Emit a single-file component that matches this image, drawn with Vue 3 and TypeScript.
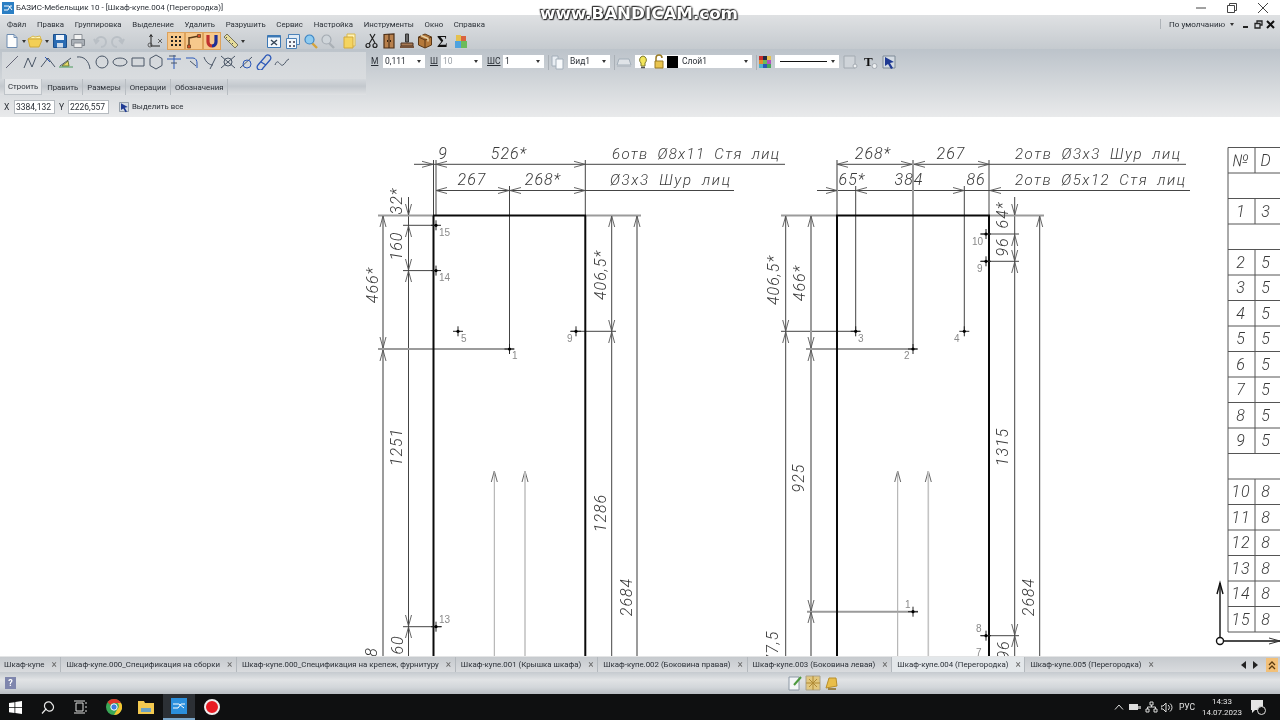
<script setup lang="ts">
import { h } from "vue";

type Part = { d?: string; f?: string; s?: string; w?: number; t?: string; x?: number; y?: number; fs?: number };
type Icon = { cx: number; parts: Part[]; on?: boolean; caret?: boolean };

// small svg icon out of a list of paths
const Ico = (props: { parts: Part[] }) =>
  h(
    "svg",
    { viewBox: "0 0 16 16", width: 16, height: 16, style: "display:block;flex:none" },
    props.parts.map((p) =>
      p.t
        ? h("text", { x: p.x, y: p.y, "font-size": p.fs, "font-weight": "bold", fill: p.f, "font-family": "Liberation Serif, serif" }, p.t)
        : h("path", { d: p.d, fill: p.f ?? "none", stroke: p.s ?? "none", "stroke-width": p.w ?? 1 })
    )
  );
Ico.props = ["parts"];

const doc: Part[] = [
  { d: "M3 1.5h7l3 3v10H3z", f: "#fdfdfd", s: "#6d8bb0" },
  { d: "M10 1.5v3h3", s: "#6d8bb0" },
];
const folder: Part[] = [
  { d: "M1 6l5-3 2 1 5-1 1 3z", f: "#fff6b8", s: "#d8b94f" },
  { d: "M1 6h12l2 1-3 7H3z", f: "#f3cf55", s: "#cfa93a" },
];
const save: Part[] = [
  { d: "M1.5 1.5h12l1 1v12h-13z", f: "#2b6cb3", s: "#1c4f8c" },
  { d: "M4 2h8v5H4z", f: "#eef4fb" },
  { d: "M5 10h6v4.5H5z", f: "#cfdcea" },
];
const printer: Part[] = [
  { d: "M4 1.5h8v5H4z", f: "#f2f2f2", s: "#8b9097" },
  { d: "M1.5 6.5h13v6h-13z", f: "#aab0b7", s: "#7d838a" },
  { d: "M4 10h8v4.5H4z", f: "#eee", s: "#8b9097" },
];
const undo: Part[] = [{ d: "M3 9a5 5 0 1 1 5 5M1 6l2 4 3-3", s: "#b9bfc5", w: 2 }];
const redo: Part[] = [{ d: "M13 9a5 5 0 1 0-5 5M15 6l-2 4-3-3", s: "#b9bfc5", w: 2 }];
const axes: Part[] = [
  { d: "M4 2v11h9M2.5 4L4 1.5 5.5 4", s: "#222" },
  { d: "M11 6l4 4M15 6l-4 4M1 12a2 2 0 1 0 4 0a2 2 0 1 0-4 0", s: "#444", w: 0.8 },
];
const grid: Part[] = [
  { d: "M3 3h2v2H3zM7 3h2v2H7zM11 3h2v2h-2zM3 7h2v2H3zM7 7h2v2H7zM11 7h2v2h-2zM3 11h2v2H3zM7 11h2v2H7zM11 11h2v2h-2z", f: "#222" },
];
const snap: Part[] = [
  { d: "M3 14V4M3 14h0M3 5L13 3", s: "#5b3a17", w: 1.4 },
  { d: "M1.5 12h3v3h-3zM11.5 1.5h3v3h-3z", f: "#d9502a", s: "#5b3a17", w: 0.7 },
];
const magnet: Part[] = [
  { d: "M4 2v7a4 4 0 0 0 4 4", s: "#c0322f", w: 3.2 },
  { d: "M12 2v7a4 4 0 0 1-4 4", s: "#1f2f96", w: 3.2 },
];
const ruler: Part[] = [
  { d: "M1 4l3-3 11 11-3 3z", f: "#e6dc9a", s: "#77735a" },
  { d: "M4 4l-1 1M7 7L6 8M10 10l-1 1", s: "#555" },
];
const zoomAll: Part[] = [
  { d: "M1.5 2.5h13v12h-13z", f: "#f2f7fc", s: "#3c78b5" },
  { d: "M1.5 2.5h13v2h-13z", f: "#3c78b5" },
  { d: "M5 7l6 5M11 7l-6 5", s: "#345", w: 1.4 },
];
const zoomWin: Part[] = [
  { d: "M3.5 1.5h11v10h-11z", f: "#dfeaf5", s: "#4d82b8" },
  { d: "M1.5 5.5h10v10h-10z", f: "#f4f8fc", s: "#4d82b8" },
  { d: "M4 8h2v2H4zM8 8h2v2H8zM4 12h2v2H4zM8 12h2v2H8z", f: "#667" },
];
const lens: Part[] = [
  { d: "M9 10l5 5", s: "#d6a33a", w: 2.4 },
  { d: "M2 6.5a4.5 4.5 0 1 0 9 0a4.5 4.5 0 1 0-9 0", f: "#8ecbf0", s: "#3c85c4", w: 1.2 },
];
const lensOff: Part[] = [
  { d: "M9 10l5 5", s: "#aab0b6", w: 2.4 },
  { d: "M2 6.5a4.5 4.5 0 1 0 9 0a4.5 4.5 0 1 0-9 0", f: "#cfd5da", s: "#a4abb2", w: 1.2 },
];
const stack: Part[] = [
  { d: "M5 1h8v12H5z", f: "#fff3b5", s: "#d7b84e" },
  { d: "M2 4h9v11H2z", f: "#f4d460", s: "#d2a83a" },
];
const scissors: Part[] = [
  { d: "M11 1L5 11M6 1l5 9", s: "#222", w: 1.2 },
  { d: "M2 12.5a2 2 0 1 0 4 0a2 2 0 1 0-4 0M9 12.5a2 2 0 1 0 4 0a2 2 0 1 0-4 0", s: "#222", w: 1.2 },
];
const cabinet: Part[] = [
  { d: "M3 1.5l10-.5v14H3z", f: "#b9814d", s: "#4c2f17", w: 1.2 },
  { d: "M8 1v14M6.5 7v2M9.5 7v2", s: "#3c2410" },
];
const stamp: Part[] = [
  { d: "M6.5 1h3v8h-3z", f: "#6a6a6a", s: "#333" },
  { d: "M2 10h12v3H2z", f: "#a87b55", s: "#4c3320" },
  { d: "M1 13h14v2H1z", f: "#76533a" },
];
const box: Part[] = [
  { d: "M8 1l6.5 3v8L8 15l-6.5-3V4z", f: "#b5793b", s: "#5a3715" },
  { d: "M1.5 4L8 7l6.5-3M8 7v8", s: "#5a3715" },
  { d: "M4 2.5L11 5.5v3", s: "#e8d2a6", w: 1.4 },
];
const sigma: Part[] = [{ t: "Σ", x: 2, y: 14, fs: 16, f: "#111" }];
const props2: Part[] = [
  { d: "M2 8h6v7H2z", f: "#4fa3df" },
  { d: "M8 8h6v7H8z", f: "#6cbb5b" },
  { d: "M3 2h5v6H3z", f: "#e5c14f" },
  { d: "M8 3h5v5H8z", f: "#d9633e" },
];

// place the icons by their center, the row itself stays a flex row
const place = (list: Icon[]) => {
  let right = 0;
  return list.map((ic) => {
    const ml = ic.cx - 8 - right;
    right = ic.cx + 8;
    return { ...ic, ml };
  });
};

const mainIcons = place([
  { cx: 12, parts: doc, caret: true },
  { cx: 35, parts: folder, caret: true },
  { cx: 60, parts: save },
  { cx: 78, parts: printer },
  { cx: 101, parts: undo },
  { cx: 117, parts: redo },
  { cx: 155, parts: axes },
  { cx: 176, parts: grid, on: true },
  { cx: 194, parts: snap, on: true },
  { cx: 212, parts: magnet, on: true },
  { cx: 231, parts: ruler, caret: true },
  { cx: 274, parts: zoomAll },
  { cx: 293, parts: zoomWin },
  { cx: 311, parts: lens },
  { cx: 328, parts: lensOff },
  { cx: 350, parts: stack },
  { cx: 372, parts: scissors },
  { cx: 389, parts: cabinet },
  { cx: 407, parts: stamp },
  { cx: 425, parts: box },
  { cx: 443, parts: sigma },
  { cx: 461, parts: props2 },
]);

const ink = "#4a5666";
const blue = "#2b58b8";
const tools: Part[][] = [
  [{ d: "M2 14L14 2", s: "#667" }],
  [{ d: "M2 14L6 4l4 9 4-10", s: ink }],
  [{ d: "M1 13L8 4l7 9", s: ink }, { d: "M5 3l5 5", s: blue }],
  [{ d: "M2 12L13 4", s: ink }, { d: "M4 12l6-5 1 5z", f: "#e8d96a", s: "#6f7a33" }, { d: "M1 13h14", s: "#4a9a5a" }],
  [{ d: "M1 3c7-1 12 4 13 12", s: ink }],
  [{ d: "M2 8a6 6 0 1 0 12 0a6 6 0 1 0-12 0", s: ink }],
  [{ d: "M1 8a7 4 0 1 0 14 0a7 4 0 1 0-14 0", s: ink }],
  [{ d: "M2 4h12v8H2z", s: ink }],
  [{ d: "M8 1l6 3.5v7L8 15l-6-3.5v-7z", s: ink }],
  [{ d: "M1 5h14M8 1v14", s: blue }, { d: "M3 2h7M5 9h6", s: ink }],
  [{ d: "M2 4h7c3 0 4 3 4 5v5", s: blue }, { d: "M6 7l6 5", s: ink }],
  [{ d: "M2 3c2 6 6 8 9 8M14 3L8 15", s: ink }],
  [{ d: "M4 8a4 4 0 1 0 8 0a4 4 0 1 0-8 0M1 2l14 12M15 2L1 14", s: ink }],
  [{ d: "M2 14L14 3", s: ink }, { d: "M5 10a4 4 0 1 0 8 0a4 4 0 1 0-8 0", s: blue }],
  [{ d: "M2 11a3 3 0 1 0 5 3l7-8a3 3 0 1 0-5-3zM5 8l5 3", s: blue, w: 1.3 }],
  [{ d: "M1 11c3-8 5 2 8 0s3-5 6-6", s: ink }],
];

const menu = ["Файл", "Правка", "Группировка", "Выделение", "Удалить", "Разрушить", "Сервис", "Настройка", "Инструменты", "Окно", "Справка"];
const panelTabs = ["Строить", "Править", "Размеры", "Операции", "Обозначения"];
const docTabs = [
  "Шкаф-купе",
  "Шкаф-купе.000_Спецификация на сборки",
  "Шкаф-купе.000_Спецификация на крепеж, фурнитуру",
  "Шкаф-купе.001 (Крышка шкафа)",
  "Шкаф-купе.002 (Боковина правая)",
  "Шкаф-купе.003 (Боковина левая)",
  "Шкаф-купе.004 (Перегородка)",
  "Шкаф-купе.005 (Перегородка)",
];

// drawing data, in screen coordinates
const heavy = "M433.5 215.5V656M585.3 215.5V656M433 215.5H586M837 215.5V656M989 215.5V656M836 215.5H990";
const grayThick = [
  "M378 215.5H433M586 215.5H641M383 215V656M637 215V656M378 349H514M781 215.5H836M990 215.5H1044",
  "M811 215V656M913 160V349M806 349H917M807 611.7H918M837 160V215",
].join("");
const thin = [
  "M414 164.3H785M436 160V215M433.5 160V215M585.3 160V215M436 190.5H734M509.5 186V349",
  "M408.5 197V656M403 225.3H437M403 270.6H437M403 626.7H442M570 331.3H616M611.7 215V656",
  "M837 164.3H1186M989 160V215M817 190.5H1190M855.7 186V331.3M964.3 186V331.3",
  "M785.7 215V656M781 331.3H860M1014.7 197V656M1039.7 215V656M980 234H1019M980 261.3H1019M980 635.7H1019",
].join("");

type Dir = "u" | "d" | "l" | "r";
const tip = (x: number, y: number, dir: Dir) => {
  const len = 11;
  const half = 3;
  if (dir === "u") return `M${x - half} ${y + len}L${x} ${y}L${x + half} ${y + len}`;
  if (dir === "d") return `M${x - half} ${y - len}L${x} ${y}L${x + half} ${y - len}`;
  if (dir === "l") return `M${x + len} ${y - half}L${x} ${y}L${x + len} ${y + half}`;
  return `M${x - len} ${y - half}L${x} ${y}L${x - len} ${y + half}`;
};
const arrowList: [number, number, Dir][] = [
  [433, 164.3, "r"], [436, 164.3, "l"], [585, 164.3, "r"],
  [436, 190.5, "l"], [509, 190.5, "r"], [510, 190.5, "l"], [585, 190.5, "r"],
  [383, 216, "u"], [383, 348, "d"], [383, 350, "u"],
  [408.5, 215, "d"], [408.5, 226, "u"], [408.5, 270, "d"], [408.5, 271, "u"], [408.5, 626, "d"], [408.5, 627, "u"],
  [611.7, 216, "u"], [611.7, 331, "d"], [611.7, 332, "u"], [637, 216, "u"],
  [494.3, 471, "u"], [525, 471, "u"],
  [837, 164.3, "l"], [912, 164.3, "r"], [914, 164.3, "l"], [989, 164.3, "r"],
  [837, 190.5, "r"], [856, 190.5, "l"], [964, 190.5, "r"], [990, 190.5, "l"],
  [785.7, 216, "u"], [785.7, 331, "d"], [785.7, 332, "u"],
  [811, 216, "u"], [811, 348, "d"], [811, 350, "u"], [811, 611, "d"], [811, 612, "u"],
  [1014.7, 215, "d"], [1014.7, 235, "u"], [1014.7, 261, "d"], [1014.7, 262, "u"], [1014.7, 635, "d"], [1014.7, 636, "u"],
  [1039.7, 216, "u"], [897.7, 471, "u"], [928.3, 471, "u"],
];
const arrows = arrowList.map((a) => tip(a[0], a[1], a[2])).join("");

const marks: [number, number][] = [
  [436, 225.3], [436, 270.6], [436, 626.7], [458, 331.3], [576, 331.3], [509.5, 349],
  [855.7, 331.3], [913, 349], [964.3, 331.3], [986, 234], [986, 261.3], [986, 635.7], [913, 611.7],
];
const crosses = marks.map((m) => `M${m[0] - 5} ${m[1]}h10M${m[0]} ${m[1] - 5}v10`).join("");

const pointLabels: [number, number, string][] = [
  [439, 236, "15"], [439, 281, "14"], [439, 623, "13"], [461, 342, "5"], [567, 342, "9"], [512, 359, "1"],
  [858, 342, "3"], [904, 359, "2"], [954, 342, "4"], [972, 245, "10"], [977, 272, "9"], [976, 632, "8"], [905, 608, "1"], [976, 656, "7"],
];

// plain dimension texts [center x, baseline y, text]
const dims: [number, number, string][] = [
  [443, 159, "9"], [509, 159, "526*"], [472, 185, "267"], [543, 185, "268*"],
  [873, 159, "268*"], [951, 159, "267"], [852, 185, "65*"], [909, 185, "384"], [976, 185, "86"],
];
// rotated ones: [baseline x, center y, text]
const rotated: [number, number, string][] = [
  [402, 201, "32*"], [402, 246, "160"], [378, 285, "466*"], [606, 275, "406,5*"], [402, 447, "1251"],
  [606, 513, "1286"], [632, 597, "2684"], [403, 645, "60"], [377, 652, "8"],
  [779, 280, "406,5*"], [805, 283, "466*"], [1008, 215, "64*"], [1008, 247, "96"], [804, 478, "925"],
  [1008, 447, "1315"], [1034, 597, "2684"], [1009, 650, "96"], [778, 647, "77,5"],
];
// hole notes [start x, baseline y, width, text]
const notes: [number, number, number, string][] = [
  [612, 159, 167, "6отв Ø8х11 Стя лиц"],
  [610, 185, 120, "Ø3х3 Шур лиц"],
  [1015, 159, 165, "2отв Ø3х3 Шур лиц"],
  [1015, 185, 170, "2отв Ø5х12 Стя лиц"],
];

const rowY = (k: number) => 147.5 + 25.5 * k;
const blankRows = [1, 3, 12];
const tableLines =
  Array.from({ length: 20 }, (_, k) => `M1228 ${rowY(k)}H1280`).join("") +
  "M1228 147.5V632" +
  Array.from({ length: 19 }, (_, k) => (blankRows.includes(k) ? "" : `M1255 ${rowY(k)}V${rowY(k + 1)}`)).join("");
const tableRows: [number, string, string][] = [
  [0, "№", "D"], [2, "1", "3"], [4, "2", "5"], [5, "3", "5"], [6, "4", "5"], [7, "5", "5"], [8, "6", "5"], [9, "7", "5"],
  [10, "8", "5"], [11, "9", "5"], [13, "10", "8"], [14, "11", "8"], [15, "12", "8"], [16, "13", "8"], [17, "14", "8"], [18, "15", "8"],
];
</script>

<template>
  <div class="app">
    <header class="title">
      <svg class="app-ico" viewBox="0 0 12 12" width="12" height="12">
        <rect width="12" height="12" fill="#2b7fc4" />
        <path d="M2 4h5l3 4M2 8h4l2-4h2" stroke="#fff" fill="none" />
      </svg>
      <span class="title-text">БАЗИС-Мебельщик 10 - [Шкаф-купе.004 (Перегородка)]</span>
      <div class="win-btns">
        <svg width="10" height="10" viewBox="0 0 10 10"><path d="M0 5h10" stroke="#444" /></svg>
        <svg width="10" height="10" viewBox="0 0 10 10"><path d="M.5 2.5h7v7h-7zM2.5 2.5v-2h7v7h-2" stroke="#444" fill="none" /></svg>
        <svg width="10" height="10" viewBox="0 0 10 10"><path d="M0 0l10 10M10 0L0 10" stroke="#444" /></svg>
      </div>
    </header>

    <div class="watermark">www.BANDICAM.com</div>

    <div class="head">
      <nav class="menu">
        <span v-for="m in menu" :key="m">{{ m }}</span>
        <div class="profile">
          <span class="profile-name">По умолчанию</span>
          <i class="caret-dark"></i>
          <div class="mdi">
            <svg width="9" height="9" viewBox="0 0 9 9"><path d="M1 7h5" stroke="#222" stroke-width="2" /></svg>
            <svg width="9" height="9" viewBox="0 0 9 9"><path d="M1 3.5h5v4.5H1zM3 3V1h5v4H6.5" stroke="#222" fill="none" stroke-width="1.3" /></svg>
            <svg width="9" height="9" viewBox="0 0 9 9"><path d="M1 1l7 7M8 1L1 8" stroke="#111" stroke-width="2" /></svg>
          </div>
        </div>
      </nav>
      <div class="main-icons">
        <span
          v-for="ic in mainIcons"
          :key="ic.cx"
          class="ib"
          :class="{ on: ic.on, caret: ic.caret }"
          :style="{ marginLeft: ic.ml + 'px' }"
        >
          <Ico :parts="ic.parts" />
        </span>
      </div>
    </div>

    <div class="lower">
      <div class="mid">
        <div class="left-col">
          <div class="tool-panel">
            <Ico v-for="(parts, i) in tools" :key="i" :parts="parts" />
          </div>
          <div class="panel-tabs">
            <span v-for="(t, i) in panelTabs" :key="t" class="ptab" :class="{ active: i === 0 }">{{ t }}</span>
          </div>
        </div>
        <div class="props">
          <span class="lbl under w-m">М</span>
          <span class="field combo w-42">0,111</span>
          <span class="lbl under w-sh">Ш</span>
          <span class="field combo w-41 muted">10</span>
          <span class="lbl under w-shs">ШС</span>
          <span class="field combo w-41">1</span>
          <i class="sep"></i>
          <Ico class="ml-2" :parts="[{ d: 'M2 2h6v10H2z', f: '#e8edf2', s: '#a3aeb9' }, { d: 'M6 5h7v10H6z', f: '#f7f9fb', s: '#a3aeb9' }]" />
          <span class="field combo w-42 ml-1">Вид1</span>
          <i class="sep"></i>
          <Ico class="ml-2" :parts="[{ d: 'M3 5h10l2 6H1z', f: '#dfe3e7', s: '#a3aeb9' }, { d: 'M1 11h14v2H1z', f: '#b8bfc6' }]" />
          <span class="field layer">
            <Ico :parts="[{ d: 'M8 2a4 4 0 0 1 2 7v3H6V9a4 4 0 0 1 2-7z', f: '#f3e65b', s: '#7e7a2b' }, { d: 'M6 13.5h4', s: '#555', w: 1.5 }]" />
            <Ico :parts="[{ d: 'M5 7V4a3 3 0 0 1 6 0', s: '#9a7a22', w: 1.5 }, { d: 'M4 7h8v7H4z', f: '#e9c44e', s: '#9a7a22' }]" />
            <i class="swatch"></i>
            <span class="layer-name">Слой1</span>
          </span>
          <i class="sep"></i>
          <Ico :parts="[{ d: 'M2 2h4v4H2z', f: '#c9302c' }, { d: 'M6 2h4v4H6z', f: '#1f2a44' }, { d: 'M10 2h4v4h-4z', f: '#e5c14f' }, { d: 'M2 6h4v4H2z', f: '#e58a2e' }, { d: 'M6 6h4v4H6z', f: '#6cbb5b' }, { d: 'M10 6h4v4h-4z', f: '#b34fbf' }, { d: 'M2 10h4v4H2z', f: '#4fb3c9' }, { d: 'M6 10h4v4H6z', f: '#2b58b8' }, { d: 'M10 10h4v4h-4z', f: '#46a65a' }]" />
          <span class="field combo line-combo ml-1"><i class="line-sample"></i></span>
          <Ico class="ml-3" :parts="[{ d: 'M2 2h11v12H2z', f: '#cfd4d9', s: '#a3aab1' }, { d: 'M11 12a2 2 0 1 0 4 0a2 2 0 1 0-4 0', f: '#eef0f2', s: '#a3aab1' }]" />
          <Ico class="ml-t" :parts="[{ t: 'T', x: 2, y: 12, fs: 13, f: '#111' }, { d: 'M10 12a2.5 2.5 0 1 0 5 0a2.5 2.5 0 1 0-5 0', f: '#eef0f2', s: '#a3aab1' }]" />
          <Ico class="ml-4" :parts="[{ d: 'M2 2h12v12H2z', f: '#d4dbe2', s: '#7f8b97' }, { d: 'M4 3l9 5-4 1 3 5-2 1-3-5-3 2z', f: '#1f3a93' }]" />
        </div>
      </div>
      <div class="coords">
        <span class="coord-lbl">X</span>
        <span class="field coord">3384,132</span>
        <span class="coord-lbl y">Y</span>
        <span class="field coord">2226,557</span>
        <Ico class="ml-select" :parts="[{ d: 'M2 2h12v12H2z', f: '#d4dbe2', s: '#7f8b97' }, { d: 'M4 3l9 5-4 1 3 5-2 1-3-5-3 2z', f: '#1f3a93' }]" />
        <span class="select-all">Выделить все</span>
      </div>
    </div>

    <main class="sheet">
      <svg class="drawing" viewBox="0 117 1280 539" width="1280" height="539">
        <path :d="thin" stroke="#444" fill="none" />
        <path :d="grayThick" stroke="#9b9b9b" stroke-width="2" fill="none" />
        <path :d="arrows" stroke="#555" stroke-width="0.9" fill="none" />
        <path d="M494.3 471V656M897.7 471V656" stroke="#a8a8a8" fill="none" />
        <path d="M525 471V656M928.3 471V656" stroke="#c4c4c4" stroke-width="1.6" fill="none" />
        <path :d="heavy" stroke="#0a0a0a" stroke-width="2" fill="none" />
        <path :d="crosses" stroke="#222" fill="none" />
        <circle v-for="m in marks" :key="m.join()" :cx="m[0]" :cy="m[1]" r="1.6" fill="#000" />

        <text v-for="d in dims" :key="d.join()" class="dim" :x="d[0]" :y="d[1]" text-anchor="middle">{{ d[2] }}</text>
        <text
          v-for="r in rotated"
          :key="r.join()"
          class="dim"
          :x="r[0]"
          :y="r[1]"
          text-anchor="middle"
          :transform="`rotate(-90 ${r[0]} ${r[1]})`"
        >{{ r[2] }}</text>
        <text
          v-for="n in notes"
          :key="n.join()"
          class="note"
          :x="n[0]"
          :y="n[1]"
          :textLength="n[2]"
        >{{ n[3] }}</text>
        <text v-for="p in pointLabels" :key="p.join()" class="point" :x="p[0]" :y="p[1]">{{ p[2] }}</text>

        <path :d="tableLines" stroke="#555" fill="none" />
        <g v-for="row in tableRows" :key="row[0]">
          <text class="dim" x="1241" :y="rowY(row[0]) + 18" text-anchor="middle">{{ row[1] }}</text>
          <text class="dim" x="1266" :y="rowY(row[0]) + 18" text-anchor="middle">{{ row[2] }}</text>
        </g>

        <path d="M1220 641V583M1220 641H1280" stroke="#111" stroke-width="1.4" fill="none" />
        <path :d="tip(1220, 583, 'u')" stroke="#111" stroke-width="1.4" fill="none" />
        <path :d="tip(1280, 641, 'r')" stroke="#333" fill="none" />
        <circle cx="1220" cy="641" r="3.5" fill="#fff" stroke="#111" stroke-width="1.4" />
      </svg>
    </main>

    <div class="tabs">
      <div v-for="(t, i) in docTabs" :key="t" class="dtab" :class="{ active: i === 6 }">
        <span>{{ t }}</span>
        <b class="close">×</b>
      </div>
      <div class="tab-nav">
        <svg width="7" height="8" viewBox="0 0 7 8"><path d="M6 0v8L1 4z" fill="#222" /></svg>
        <svg width="7" height="8" viewBox="0 0 7 8"><path d="M1 0v8l5-4z" fill="#222" /></svg>
        <span class="tab-up">
          <svg width="8" height="10" viewBox="0 0 8 10"><path d="M1 5l3-3 3 3M1 9l3-3 3 3" stroke="#5a3a10" stroke-width="1.3" fill="none" /></svg>
        </span>
      </div>
    </div>

    <div class="status">
      <span class="help">?</span>
      <div class="status-icons">
        <Ico :parts="[{ d: 'M2 2h10v13H2z', f: '#f4f6f8', s: '#8c98a5' }, { d: 'M7 10l7-8', s: '#4d9a3f', w: 2 }]" />
        <Ico :parts="[{ d: 'M1 1h14v14H1z', f: '#e2c77e', s: '#a9a18c' }, { d: 'M1 8h14M8 1v14M4 4l8 8M12 4l-8 8', s: '#b08a35' }]" />
        <Ico :parts="[{ d: 'M3 13L6 3h7l1 8z', f: '#e9be4a', s: '#b88e2a' }, { d: 'M5 14h8', s: '#8a6a20', w: 1.5 }]" />
      </div>
    </div>

    <footer class="taskbar">
      <svg class="t-win" width="13" height="13" viewBox="0 0 13 13"><path d="M0 2l5.5-.8v5H0zM6.3 1l6.7-1v6.200H6.300zM0 7h5.500v5L0 11.200zM6.300 7H13v6l-6.700-1z" fill="#fff" /></svg>
      <svg class="t-search" width="14" height="14" viewBox="0 0 14 14"><path d="M5 9a4 4 0 1 0 6-5a4 4 0 1 0-6 5zM5 9l-4 4.500" stroke="#e8e8e8" stroke-width="1.200" fill="none" /></svg>
      <svg class="t-view" width="14" height="14" viewBox="0 0 14 14"><path d="M2 3h7v8H2zM12 2v2M12 6v2M12 10v2M0 1h11M0 13h11" stroke="#ddd" fill="none" /></svg>
      <svg class="t-chrome" width="16" height="16" viewBox="0 0 16 16">
        <circle cx="8" cy="8" r="8" fill="#3aa757" />
        <path d="M8 0a8 8 0 0 1 7 4H8a4 4 0 0 0-3.500 2L1.600 3.200A8 8 0 0 1 8 0z" fill="#e0392b" />
        <path d="M15 4a8 8 0 0 1-7 12l3.500-6a4 4 0 0 0 0-6z" fill="#f5c531" />
        <circle cx="8" cy="8" r="3.200" fill="#3b7de0" stroke="#fff" />
      </svg>
      <svg class="t-folder" width="16" height="14" viewBox="0 0 16 14"><path d="M0 1h6l1 2h9v11H0z" fill="#f3c950" /><path d="M3 8h10v4H3z" fill="#6ca3c4" /></svg>
      <span class="t-app">
        <svg width="16" height="16" viewBox="0 0 16 16"><rect width="16" height="16" fill="#2b8fdc" /><path d="M2 6h6l5 4M2 10h5l3-4h4" stroke="#fff" fill="none" /></svg>
      </span>
      <svg class="t-rec" width="16" height="16" viewBox="0 0 16 16"><circle cx="8" cy="8" r="7" fill="#e81b23" stroke="#eee" stroke-width="2" /></svg>
      <div class="tray">
        <svg width="10" height="6" viewBox="0 0 10 6"><path d="M1 5.500l4-4.500 4 4.500" stroke="#ddd" fill="none" /></svg>
        <svg class="tr-bat" width="12" height="9" viewBox="0 0 12 9"><path d="M0 1h9v6H0z" fill="#ddd" /><path d="M9 3h3v3H9z" fill="#999" /></svg>
        <svg class="tr-net" width="13" height="13" viewBox="0 0 13 13"><path d="M5 1h3v3H5zM1 8h3v3H1zM9 8h3v3H9zM6.500 4v2M2.500 8V6h8v2" stroke="#ddd" fill="none" /></svg>
        <svg class="tr-snd" width="13" height="11" viewBox="0 0 13 11"><path d="M0 4h2l3-3v9L2 7H0zM7 3a3 3 0 0 1 0 5M9 1.500a5 5 0 0 1 0 8" stroke="#ddd" fill="none" /></svg>
        <span class="lang">РУС</span>
        <div class="clock"><span>14:33</span><span>14.07.2023</span></div>
        <svg class="notif" width="16" height="16" viewBox="0 0 16 16">
          <path d="M1 1h12v10H5l-3 3v-3H1z" fill="#e4e4e4" />
          <circle cx="11.500" cy="11.500" r="4" fill="#111" stroke="#ddd" />
        </svg>
      </div>
    </footer>
  </div>
</template>

<style>
html,
body {
  margin: 0;
  background: #fff;
}
</style>

<style scoped>
/* the reference is a soft video frame */
.app {
  position: relative;
  display: flex;
  flex-direction: column;
  width: 1280px;
  height: 720px;
  overflow: hidden;
  font-family: Roboto, "Liberation Sans", Arial, sans-serif;
  font-size: 7.8px;
  color: #2a2f36;
  filter: blur(0.35px);
}

.title {
  display: flex;
  align-items: center;
  height: 15px;
  padding-left: 2px;
  background: #fff;
}
.title-text {
  margin-left: 2px;
  font-size: 8px;
}
.win-btns {
  display: flex;
  gap: 21px;
  margin-left: auto;
  padding-right: 12px;
}
.watermark {
  position: absolute;
  top: 4px;
  left: 530px;
  width: 218px;
  text-align: center;
  white-space: nowrap;
  font-family: "DejaVu Sans", sans-serif;
  font-size: 16.7px;
  line-height: 18px;
  font-weight: bold;
  color: #fff;
  text-shadow: 0 0 2px #222, 0 0 2px #222, 1px 1px 1px #333, -1px -1px 1px #333;
}

.head {
  height: 34px;
  background: linear-gradient(#dfe1e3, #c5cacf);
}
.menu {
  display: flex;
  align-items: center;
  gap: 10.7px;
  height: 18px;
  padding-left: 7px;
}
.profile {
  display: flex;
  align-items: center;
  margin-left: auto;
  border-left: 1px solid #aeb3b8;
  padding-left: 8px;
}
.profile-name {
  width: 59px;
  font-size: 8.1px;
  white-space: nowrap;
}
.caret-dark {
  margin-left: 2px;
  border: 2px solid transparent;
  border-top: 3px solid #333;
  border-bottom: 0;
}
.mdi {
  display: flex;
  gap: 3px;
  margin-left: 8px;
  padding-right: 5px;
}
.main-icons {
  display: flex;
  height: 16px;
}
.ib {
  position: relative;
  flex: none;
  width: 16px;
  height: 16px;
}
.ib.on::before {
  content: "";
  position: absolute;
  inset: -1px;
  background: #f6c88c;
  border: 1px solid #dda25c;
}
.ib > svg {
  position: relative;
}
.ib.caret::after {
  content: "";
  position: absolute;
  top: 7px;
  right: -6px;
  border: 2px solid transparent;
  border-top: 3px solid #333;
  border-bottom: 0;
}

.lower {
  height: 68px;
  background: linear-gradient(#bcc3ca, #e9eaeb);
}
.mid {
  display: flex;
  height: 47px;
}
.left-col {
  width: 366px;
  flex: none;
}
.tool-panel {
  display: flex;
  align-items: flex-start;
  gap: 2px;
  box-sizing: border-box;
  height: 27px;
  margin: 3px 0 0 2px;
  padding: 2px 0 0 2px;
  background: linear-gradient(#d3d7db, #d9dcdf);
}
.panel-tabs {
  display: flex;
  height: 16px;
  padding-left: 4px;
  background: linear-gradient(#d4d8dc, #c3c8cd 45%, #dfe1e3);
}
.ptab {
  display: flex;
  align-items: center;
  padding: 0 4px;
  border-right: 1px solid #b8bdc2;
}
.ptab.active {
  padding: 0 3px;
  background: #e6e8ea;
  border: 1px solid #bfc4c9;
  border-top: 0;
  margin-right: 1px;
}

.props {
  display: flex;
  align-items: flex-start;
  padding: 6px 0 0 5px;
}
.props > svg {
  margin-top: -1px;
}
.lbl {
  flex: none;
  line-height: 13px;
  font-size: 8.5px;
}
.under {
  text-decoration: underline;
}
.w-m {
  width: 12px;
}
.w-sh {
  width: 11px;
  margin-left: 5px;
}
.w-shs {
  width: 16px;
  margin-left: 5px;
}
.field {
  position: relative;
  flex: none;
  box-sizing: border-box;
  height: 13px;
  line-height: 13px;
  padding-left: 2px;
  background: #fff;
  font-size: 8.5px;
  white-space: nowrap;
}
.combo::after {
  content: "";
  position: absolute;
  top: 5px;
  right: 4px;
  border: 2px solid transparent;
  border-top: 3px solid #333;
  border-bottom: 0;
}
.w-42 {
  width: 42px;
}
.w-41 {
  width: 41px;
}
.muted {
  color: #9aa0a6;
}
.sep {
  flex: none;
  width: 1px;
  height: 15px;
  margin-left: 4px;
  background: #aab0b6;
}
.ml-1 {
  margin-left: 2px;
}
.ml-2 {
  margin-left: 1px;
}
.ml-3 {
  margin-left: 3px;
}
.ml-t {
  margin-left: 4px;
}
.ml-4 {
  margin-left: 3px;
}
.layer {
  display: flex;
  align-items: center;
  width: 117px;
  margin-left: 3px;
  padding-left: 0;
}
.layer::after {
  content: "";
  position: absolute;
  top: 5px;
  right: 4px;
  border: 2px solid transparent;
  border-top: 3px solid #333;
  border-bottom: 0;
}
.swatch {
  width: 11px;
  height: 12px;
  margin-left: 0;
  background: #000;
}
.layer-name {
  margin-left: 4px;
}
.line-combo {
  width: 64px;
}
.line-sample {
  position: absolute;
  top: 6px;
  left: 5px;
  width: 47px;
  height: 1px;
  background: #111;
}

.coords {
  display: flex;
  align-items: center;
  height: 21px;
  padding-left: 4px;
}
.coord-lbl {
  width: 10px;
  flex: none;
  font-size: 8.5px;
}
.coord-lbl.y {
  margin-left: 4px;
  width: 9px;
}
.field.coord {
  width: 41px;
  height: 14px;
  border: 1px solid #b6bbc0;
  line-height: 12px;
  padding-left: 1px;
}
.ml-select {
  width: 12px;
  height: 12px;
  margin-left: 9px;
}
.select-all {
  margin-left: 2px;
}

.sheet {
  flex: 1;
  min-height: 0;
  background: #fff;
}
.drawing {
  display: block;
}
.dim,
.note {
  font-family: Roboto, "DejaVu Sans", sans-serif;
  font-style: italic;
  font-weight: 300;
  font-size: 16px;
  fill: #3a3a3a;
}
.dim {
  letter-spacing: 1px;
}
.note {
  font-size: 15px;
  word-spacing: 4px;
}
.point {
  font-family: "Liberation Sans", sans-serif;
  font-size: 10px;
  fill: #8a8a8a;
}

.tabs {
  display: flex;
  align-items: center;
  height: 16px;
  padding-left: 4px;
  background: linear-gradient(#c6cace, #d9dbde);
  border-top: 1px solid #e4e5e6;
  box-sizing: border-box;
  font-size: 7.87px;
  white-space: nowrap;
}
.dtab {
  display: flex;
  align-items: center;
  height: 100%;
  padding-right: 3px;
  margin-right: 5px;
  border-right: 1px solid #b3b8bd;
}
.dtab.active {
  background: #e3e7ea;
  margin-left: -5px;
  padding-left: 5px;
  margin-right: 5px;
}
.dtab:nth-last-of-type(2) {
  border-right: 0;
}
.close {
  margin-left: 7px;
  width: 6px;
  font-weight: normal;
  font-size: 10px;
  color: #666;
}
.tab-nav {
  display: flex;
  align-items: center;
  gap: 5px;
  margin-left: auto;
  padding-right: 2px;
}
.tab-up {
  display: flex;
  align-items: center;
  justify-content: center;
  width: 12px;
  height: 14px;
  margin-left: 2px;
  background: #f2c078;
}

.status {
  display: flex;
  align-items: center;
  height: 22px;
  padding-left: 5px;
  background: linear-gradient(#c5cacf, #e1e3e5 35%, #d2d6da 70%, #b9bec3);
}
.help {
  display: flex;
  align-items: center;
  justify-content: center;
  width: 11px;
  height: 12px;
  background: #7f86ad;
  color: #fff;
  font-weight: bold;
  font-size: 9px;
}
.status-icons {
  display: flex;
  gap: 2px;
  margin-left: 771px;
}

.taskbar {
  display: flex;
  align-items: center;
  height: 26px;
  background: #0f1011;
  color: #e4e4e4;
}
.t-win {
  margin-left: 9px;
}
.t-search {
  margin-left: 19px;
}
.t-view {
  margin-left: 19px;
}
.t-chrome {
  margin-left: 18px;
}
.t-folder {
  margin-left: 16px;
}
.t-app {
  display: flex;
  align-items: center;
  justify-content: center;
  box-sizing: border-box;
  width: 32px;
  height: 26px;
  margin-left: 9px;
  background: #2c3035;
  border-bottom: 2px solid #7aa6c9;
}
.t-rec {
  margin-left: 9px;
}
.tray {
  display: flex;
  align-items: center;
  margin-left: auto;
  padding-right: 14px;
}
.tr-bat {
  margin-left: 5px;
}
.tr-net {
  margin-left: 4px;
}
.tr-snd {
  margin-left: 3px;
}
.lang {
  width: 17px;
  margin-left: 5px;
  font-size: 8.5px;
}
.clock {
  display: flex;
  flex-direction: column;
  align-items: center;
  gap: 2px;
  width: 36px;
  margin-left: 8px;
  font-size: 8px;
}
.notif {
  margin-left: 10px;
}
</style>
